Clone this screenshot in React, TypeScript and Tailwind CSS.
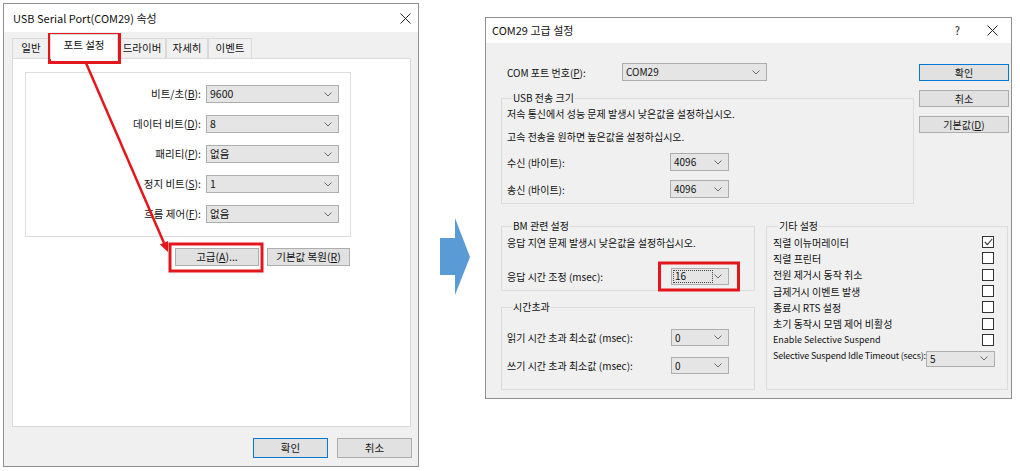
import React from "react"
import clsx from "clsx"

function Chevron() {
  return (
    <svg width="8" height="5" viewBox="0 0 8 5" className="shrink-0">
      <polyline points="0.5,0.5 4,4 7.5,0.5" fill="none" stroke="#6b6b6b" strokeWidth="1" />
    </svg>
  )
}

function Combo({ value, className, focus }: { value: string; className: string; focus?: boolean }) {
  return (
    <div className={clsx("flex shrink-0 items-center justify-between border border-[#adadad] bg-[#e5e5e5] pr-[6px]", className)}>
      {focus ? (
        <span className="ml-[1px] flex h-[13px] w-[40px] items-center border border-dotted border-[#444] pl-[1px] leading-none">{value}</span>
      ) : (
        <span className="pl-[3px] leading-none">{value}</span>
      )}
      <Chevron />
    </div>
  )
}

function CloseIcon() {
  return (
    <svg width="11" height="11" viewBox="0 0 11 11">
      <path d="M0.5 0.5 L10.5 10.5 M10.5 0.5 L0.5 10.5" stroke="#222" strokeWidth="1" />
    </svg>
  )
}

function Btn({ children, className }: { children: React.ReactNode; className: string }) {
  return (
    <div className={clsx("flex items-center justify-center border bg-[#e1e1e1] leading-none", className)}>
      {children}
    </div>
  )
}

function Check({ checked }: { checked?: boolean }) {
  return (
    <div className="flex h-[12px] w-[12px] items-center justify-center border border-[#333] bg-white">
      {checked && (
        <svg width="9" height="8" viewBox="0 0 9 8">
          <polyline points="0.8,4 3.3,6.6 8.2,1" fill="none" stroke="#333" strokeWidth="1.1" />
        </svg>
      )}
    </div>
  )
}

function Acc({ c }: { c: string }) {
  return <span className="underline underline-offset-[1px]">{c}</span>
}

const portRows = [
  { label: <>비트/초(<Acc c="B" />):</>, value: "9600" },
  { label: <>데이터 비트(<Acc c="D" />):</>, value: "8" },
  { label: <>패리티(<Acc c="P" />):</>, value: "없음" },
  { label: <>정지 비트(<Acc c="S" />):</>, value: "1" },
  { label: <>흐름 제어(<Acc c="F" />):</>, value: "없음" },
]

const tabs = [
  { name: "일반", w: "w-[38px]" },
  { name: "포트 설정", w: "w-[68px]", active: true },
  { name: "드라이버", w: "w-[48px]" },
  { name: "자세히", w: "w-[42px]" },
  { name: "이벤트", w: "w-[44px]" },
]

const etcRows = [
  { label: "직렬 이뉴머레이터", checked: true },
  { label: "직렬 프린터" },
  { label: "전원 제거시 동작 취소" },
  { label: "급제거시 이벤트 발생" },
  { label: "종료시 RTS 설정" },
  { label: "초기 동작시 모뎀 제어 비활성" },
  { label: "Enable Selective Suspend", latin: true },
]

function PortDialog() {
  return (
    <div className="flex h-[464px] w-[416px] flex-col border border-[#8f8f8f] bg-[#f0f0f0] text-[10.5px] text-[#111]">
      <div className="flex h-[28px] items-center justify-between bg-white pl-[9px] pr-[7px]">
        <span className="text-[11px]">USB Serial Port(COM29) 속성</span>
        <CloseIcon />
      </div>
      <div className="flex flex-1 flex-col pl-[8px]">
        <div className="flex h-[26px] items-end">
          {tabs.map(t => (
            <div
              key={t.name}
              className={clsx(
                "flex items-center justify-center border border-b-0 border-[#d9d9d9] leading-none",
                t.w,
                t.active ? "relative z-10 -mb-px h-[25px] bg-white pb-[3px]" : "h-[20px] bg-[#f0f0f0]"
              )}
            >
              {t.name}
            </div>
          ))}
        </div>
        <div className="h-[369px] w-[399px] border border-[#d9d9d9] bg-white pl-[12px] pt-[13px]">
          <div className="flex h-[165px] w-[326px] flex-col gap-[12px] border border-[#dcdcdc] pr-[11px] pt-[12px]">
            {portRows.map((r, i) => (
              <div key={i} className="flex h-[18px] items-center justify-end gap-[5px]">
                <span>{r.label}</span>
                <Combo value={r.value} className="h-[18px] w-[133px]" />
              </div>
            ))}
          </div>
          <div className="mt-[11px] flex w-[326px] justify-end gap-[8px] pr-[1px]">
            <Btn className="h-[18px] w-[84px] border-[#adadad]">고급(<Acc c="A" />)...</Btn>
            <Btn className="h-[18px] w-[83px] border-[#adadad]">기본값 복원(<Acc c="R" />)</Btn>
          </div>
        </div>
        <div className="mt-[11px] flex justify-end gap-[9px] pr-[6px]">
          <Btn className="h-[20px] w-[75px] border-[#0078d7]">확인</Btn>
          <Btn className="h-[20px] w-[75px] border-[#adadad]">취소</Btn>
        </div>
      </div>
    </div>
  )
}

function Legend({ children }: { children: React.ReactNode }) {
  return <legend className="ml-[5px] px-[1px] text-[10px] leading-[12px]">{children}</legend>
}

function AdvancedDialog() {
  return (
    <div className="flex h-[382px] w-[527px] flex-col border border-[#8f8f8f] bg-[#f0f0f0] text-[10px] text-[#111]">
      <div className="flex h-[25px] shrink-0 items-center bg-white pl-[6px] pr-[13px]">
        <span className="flex-1 text-[11px]">COM29 고급 설정</span>
        <span className="mr-[27px] text-[11px]">?</span>
        <CloseIcon />
      </div>
      <div className="flex flex-col pl-[15px] pt-[20px]">
        <div className="flex">
          <div className="flex w-[413px] flex-col">
            <div className="flex h-[18px] items-center pl-[6px]">
              <span className="w-[115px]">COM 포트 번호(<Acc c="P" />):</span>
              <Combo value="COM29" className="h-[18px] w-[145px]" />
            </div>
            <fieldset className="mt-[11px] h-[112px] border border-[#dcdcdc] pl-[5px]">
              <Legend>USB 전송 크기</Legend>
              <div className="mt-[1px] flex h-[16px] items-center">저속 통신에서 성능 문제 발생시 낮은값을 설정하십시오.</div>
              <div className="mt-[7px] flex h-[16px] items-center">고속 전송을 원하면 높은값을 설정하십시오.</div>
              <div className="mt-[9px] flex h-[18px] items-center">
                <span className="w-[163px]">수신 (바이트):</span>
                <Combo value="4096" className="h-[18px] w-[59px]" />
              </div>
              <div className="mt-[9px] flex h-[18px] items-center">
                <span className="w-[163px]">송신 (바이트):</span>
                <Combo value="4096" className="h-[18px] w-[59px]" />
              </div>
            </fieldset>
          </div>
          <div className="ml-[5px] mt-[1px] flex w-[90px] flex-col gap-[9px]">
            <Btn className="h-[17px] w-[90px] border-[#0078d7]">확인</Btn>
            <Btn className="h-[17px] w-[90px] border-[#adadad]">취소</Btn>
            <Btn className="h-[17px] w-[90px] border-[#adadad]">기본값(<Acc c="D" />)</Btn>
          </div>
        </div>
        <div className="mt-[16px] flex">
          <div className="flex w-[254px] flex-col">
            <fieldset className="h-[71px] border border-[#dcdcdc] pl-[5px]">
              <Legend>BM 관련 설정</Legend>
              <div className="mt-[2px] flex h-[16px] items-center">응답 지연 문제 발생시 낮은값을 설정하십시오.</div>
              <div className="mt-[17px] flex h-[18px] items-center">
                <span className="w-[164px]">응답 시간 조정 (msec):</span>
                <Combo value="16" focus className="h-[17px] w-[58px]" />
              </div>
            </fieldset>
            <fieldset className="mt-[10px] h-[89px] border border-[#dcdcdc] pl-[5px]">
              <Legend>시간초과</Legend>
              <div className="mt-[16px] flex h-[17px] items-center">
                <span className="w-[164px]">읽기 시간 초과 최소값 (msec):</span>
                <Combo value="0" className="h-[17px] w-[58px]" />
              </div>
              <div className="mt-[11px] flex h-[17px] items-center">
                <span className="w-[164px]">쓰기 시간 초과 최소값 (msec):</span>
                <Combo value="0" className="h-[17px] w-[58px]" />
              </div>
            </fieldset>
          </div>
          <fieldset className="ml-[11px] h-[170px] w-[242px] border border-[#dcdcdc] pl-[6px] pr-[13px]">
            <Legend>기타 설정</Legend>
            <div className="mt-[2px] flex flex-col">
              {etcRows.map(r => (
                <div key={r.label} className="flex h-[16.3px] items-center justify-between">
                  <span className={clsx("whitespace-nowrap", r.latin && "text-[9px]")}>{r.label}</span>
                  <Check checked={r.checked} />
                </div>
              ))}
              <div className="flex h-[16.3px] items-center">
                <span className="w-[153px] shrink-0 whitespace-nowrap text-[9px] tracking-[-0.2px]">Selective Suspend Idle Timeout (secs):</span>
                <Combo value="5" className="-mr-[2px] mt-[5px] h-[16px] w-[69px]" />
              </div>
            </div>
          </fieldset>
        </div>
      </div>
    </div>
  )
}

export default function App() {
  return (
    <div className="relative h-[471px] w-[1020px] overflow-hidden bg-white font-['Noto_Sans_CJK_KR','Noto_Sans',sans-serif]">
      <div className="flex items-start pl-[3px] pt-[3px]">
        <PortDialog />
        <svg width="30" height="78" viewBox="0 0 30 78" className="ml-[21px] mt-[215px] shrink-0">
          <polygon points="0,20 15,20 15,0 30,39 15,77 15,57 0,57" fill="#5b9bd5" />
        </svg>
        <div className="ml-[15px] mt-[14px]">
          <AdvancedDialog />
        </div>
      </div>
      <svg className="pointer-events-none absolute inset-0" width="1020" height="471" viewBox="0 0 1020 471">
        <g fill="none" stroke="#e3161b">
          <rect x="49.5" y="34.5" width="70" height="28" strokeWidth="3" />
          <rect x="170" y="244" width="92" height="27" strokeWidth="3" />
          <rect x="659.5" y="263" width="79" height="27" strokeWidth="3" />
          <line x1="86" y1="63" x2="164" y2="243" strokeWidth="2.5" />
        </g>
        <polygon points="168,252 159.9,244.6 168.1,241" fill="#e3161b" />
      </svg>
    </div>
  )
}
